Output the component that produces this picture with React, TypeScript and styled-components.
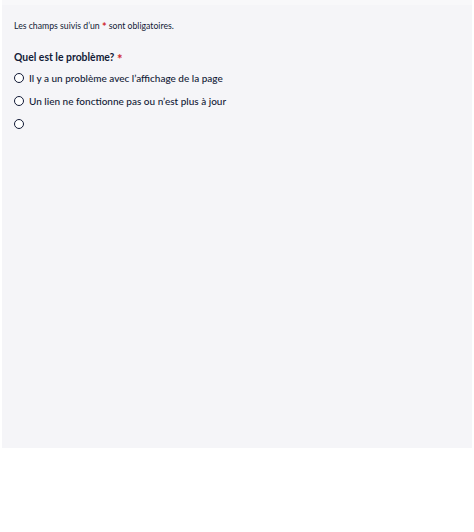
import React from 'react'
import styled, { createGlobalStyle } from 'styled-components'

const GlobalStyle = createGlobalStyle`
  body {
    margin: 0;
    background: #ffffff;
    font-family: Lato, "Open Sans", sans-serif;
    color: #121a36;
  }
`

const Panel = styled.form`
  box-sizing: border-box;
  margin: 0 2px;
  height: 448px;
  background: #f5f5f8;
  border-top: 5px solid #f8f8fa;
  padding: 14px 12px 0;
`

const Notice = styled.p`
  margin: 0 0 16px;
  font-size: 8.7px;
  line-height: 14px;
`

const Required = styled.span`
  color: #d0252b;
  font-weight: 700;
  font-size: 1.25em;
  line-height: 0;
  vertical-align: -0.22em;
`

const Fieldset = styled.fieldset`
  border: 0;
  margin: 0;
  padding: 0;
`

const Legend = styled.legend`
  padding: 0;
  margin-bottom: 1px;
  font-size: 10.4px;
  line-height: 16px;
  font-weight: 700;
`

const Option = styled.label`
  display: flex;
  align-items: center;
  gap: 5px;
  height: 23px;
  font-size: 10px;
  font-weight: 500;
`

const Radio = styled.input`
  appearance: none;
  box-sizing: border-box;
  margin: 0;
  width: 10px;
  height: 10px;
  border: 1px solid #121a36;
  border-radius: 50%;
  background: #ffffff;
`

const options = [
  'Il y a un problème avec l’affichage de la page',
  'Un lien ne fonctionne pas ou n’est plus à jour',
  '',
]

export default function App() {
  return (
    <>
      <GlobalStyle />
      <Panel>
        <Notice>
          Les champs suivis d’un <Required>*</Required> sont obligatoires.
        </Notice>
        <Fieldset>
          <Legend>
            Quel est le problème? <Required>*</Required>
          </Legend>
          {options.map((label, i) => (
            <Option key={i}>
              <Radio type="radio" name="probleme" />
              {label}
            </Option>
          ))}
        </Fieldset>
      </Panel>
    </>
  )
}
